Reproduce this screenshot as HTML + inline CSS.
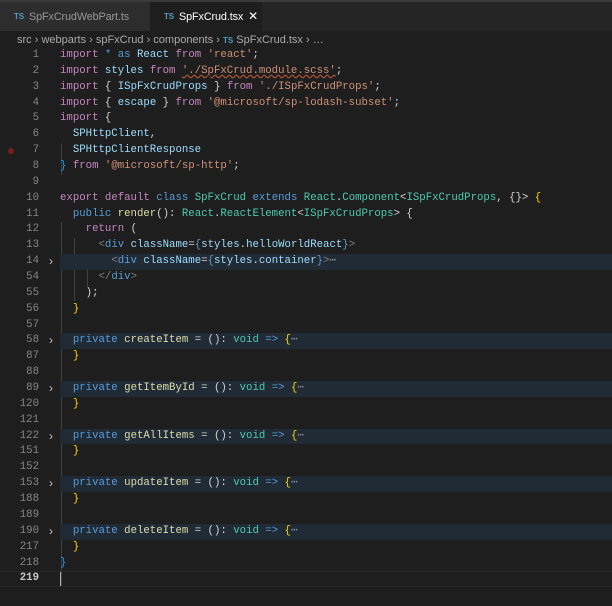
<!DOCTYPE html>
<html><head><meta charset="utf-8"><style>
body{margin:0;width:612px;height:606px;background:#1e1e1e;overflow:hidden;font-family:"Liberation Sans",sans-serif;position:relative}
.top{position:absolute;left:0;top:0;width:612px;height:2px;background:#3a3a3a}
.tabs{position:absolute;left:0;top:2px;width:612px;height:29px;background:#252526}
.tab{position:absolute;top:0;height:29px;font-size:10.8px;line-height:29px;color:#969696;white-space:nowrap;letter-spacing:-0.1px}
.t1{left:0;width:150px;background:#2d2d2d}
.t2{left:150px;width:112px;background:#1e1e1e;color:#fff}
.ts{color:#519aba;font-size:8px;font-weight:bold;margin:0 5px 0 14px;vertical-align:1px}
.bc{position:absolute;left:17px;top:31px;height:18px;line-height:18px;font-size:11px;color:#a9a9a9;white-space:nowrap}
.code{position:absolute;left:0;top:48px;width:612px;font-family:"Liberation Mono",monospace;font-size:10.7px}
.r{position:relative;height:15.86px;line-height:15.86px;white-space:pre}
.n{position:absolute;left:0;width:39px;text-align:right;color:#858585}
.c{position:absolute;left:60px;color:#d4d4d4}
.fb{position:absolute;left:60px;right:0;top:0;bottom:0;background:#212b36}
.ch{position:absolute;left:49px;color:#c5c5c5;font-family:"Liberation Sans";font-size:12px}
.k{color:#c586c0}.b{color:#569cd6}.v{color:#9cdcfe}.t{color:#4ec9b0}.s{color:#ce9178}.y{color:#dcdcaa}
.g{color:#ffd700}.p{color:#da70d6}.u{color:#179fff}.gr{color:#808080}.e{color:#8c8c8c}.w{color:#d4d4d4}
.ig{position:absolute;width:1px;background:#404040}
</style></head><body>
<div class="top"></div>
<div class="tabs">
<div class="tab t1"><span class="ts">TS</span>SpFxCrudWebPart.ts</div>
<div class="tab t2"><span class="ts">TS</span>SpFxCrud.tsx <span style="margin-left:2px;font-size:12px">✕</span></div>
</div>
<div class="bc">src › webparts › spFxCrud › components › <span style="color:#519aba;font-size:8px;font-weight:bold">TS</span> SpFxCrud.tsx › …</div>
<div style="position:absolute;left:8px;top:148px;width:6px;height:6px;border-radius:50%;background:#7a1d1d"></div>
<div class="ig" style="left:61px;top:143px;height:32px"></div>
<div class="ig" style="left:61px;top:222px;height:365px"></div>
<div class="ig" style="left:74px;top:238px;height:63px"></div>
<div class="ig" style="left:87px;top:254px;height:32px"></div>
<div class="code">
<div class="r"><span class="n">1</span><span class="c"><span class="k">import</span> <span class="b">*</span> <span class="b">as</span> <span class="v">React</span> <span class="k">from</span> <span class="s">'react'</span>;</span></div>
<div class="r"><span class="n">2</span><span class="c"><span class="k">import</span> <span class="v">styles</span> <span class="k">from</span> <span class="s" style="text-decoration:underline wavy #b5563a">'./SpFxCrud.module.scss'</span>;</span></div>
<div class="r"><span class="n">3</span><span class="c"><span class="k">import</span> <span class="w">{</span> <span class="v">ISpFxCrudProps</span> <span class="w">}</span> <span class="k">from</span> <span class="s">'./ISpFxCrudProps'</span>;</span></div>
<div class="r"><span class="n">4</span><span class="c"><span class="k">import</span> <span class="w">{</span> <span class="v">escape</span> <span class="w">}</span> <span class="k">from</span> <span class="s">'@microsoft/sp-lodash-subset'</span>;</span></div>
<div class="r"><span class="n">5</span><span class="c"><span class="k">import</span> <span class="w">{</span></span></div>
<div class="r"><span class="n">6</span><span class="c">  <span class="v">SPHttpClient</span>,</span></div>
<div class="r"><span class="n">7</span><span class="c">  <span class="v">SPHttpClientResponse</span></span></div>
<div class="r"><span class="n">8</span><span class="c"><span class="u">}</span> <span class="k">from</span> <span class="s">'@microsoft/sp-http'</span>;</span></div>
<div class="r"><span class="n">9</span></div>
<div class="r"><span class="n">10</span><span class="c"><span class="k">export</span> <span class="k">default</span> <span class="b">class</span> <span class="t">SpFxCrud</span> <span class="b">extends</span> <span class="t">React</span>.<span class="t">Component</span>&lt;<span class="t">ISpFxCrudProps</span>, <span class="w">{}</span>&gt; <span class="g">{</span></span></div>
<div class="r"><span class="n">11</span><span class="c">  <span class="b">public</span> <span class="y">render</span><span class="w">()</span>: <span class="t">React</span>.<span class="t">ReactElement</span>&lt;<span class="t">ISpFxCrudProps</span>&gt; <span class="w">{</span></span></div>
<div class="r"><span class="n">12</span><span class="c">    <span class="k">return</span> <span class="w">(</span></span></div>
<div class="r"><span class="n">13</span><span class="c">      <span class="gr">&lt;</span><span class="b">div</span> <span class="v">className</span>=<span class="b">{</span><span class="v">styles</span>.<span class="v">helloWorldReact</span><span class="b">}</span><span class="gr">&gt;</span></span></div>
<div class="r"><div class="fb"></div><span class="n">14</span><span class="ch">›</span><span class="c">        <span class="gr">&lt;</span><span class="b">div</span> <span class="v">className</span>=<span class="b">{</span><span class="v">styles</span>.<span class="v">container</span><span class="b">}</span><span class="gr">&gt;</span><span class="e">⋯</span></span></div>
<div class="r"><span class="n">54</span><span class="c">      <span class="gr">&lt;/</span><span class="b">div</span><span class="gr">&gt;</span></span></div>
<div class="r"><span class="n">55</span><span class="c">    <span class="w">)</span>;</span></div>
<div class="r"><span class="n">56</span><span class="c">  <span class="g">}</span></span></div>
<div class="r"><span class="n">57</span></div>
<div class="r"><div class="fb"></div><span class="n">58</span><span class="ch">›</span><span class="c">  <span class="b">private</span> <span class="y">createItem</span> = <span class="w">()</span>: <span class="t">void</span> <span class="b">=&gt;</span> <span class="g">{</span><span class="e">⋯</span></span></div>
<div class="r"><span class="n">87</span><span class="c">  <span class="g">}</span></span></div>
<div class="r"><span class="n">88</span></div>
<div class="r"><div class="fb"></div><span class="n">89</span><span class="ch">›</span><span class="c">  <span class="b">private</span> <span class="y">getItemById</span> = <span class="w">()</span>: <span class="t">void</span> <span class="b">=&gt;</span> <span class="g">{</span><span class="e">⋯</span></span></div>
<div class="r"><span class="n">120</span><span class="c">  <span class="g">}</span></span></div>
<div class="r"><span class="n">121</span></div>
<div class="r"><div class="fb"></div><span class="n">122</span><span class="ch">›</span><span class="c">  <span class="b">private</span> <span class="y">getAllItems</span> = <span class="w">()</span>: <span class="t">void</span> <span class="b">=&gt;</span> <span class="g">{</span><span class="e">⋯</span></span></div>
<div class="r"><span class="n">151</span><span class="c">  <span class="g">}</span></span></div>
<div class="r"><span class="n">152</span></div>
<div class="r"><div class="fb"></div><span class="n">153</span><span class="ch">›</span><span class="c">  <span class="b">private</span> <span class="y">updateItem</span> = <span class="w">()</span>: <span class="t">void</span> <span class="b">=&gt;</span> <span class="g">{</span><span class="e">⋯</span></span></div>
<div class="r"><span class="n">188</span><span class="c">  <span class="g">}</span></span></div>
<div class="r"><span class="n">189</span></div>
<div class="r"><div class="fb"></div><span class="n">190</span><span class="ch">›</span><span class="c">  <span class="b">private</span> <span class="y">deleteItem</span> = <span class="w">()</span>: <span class="t">void</span> <span class="b">=&gt;</span> <span class="g">{</span><span class="e">⋯</span></span></div>
<div class="r"><span class="n">217</span><span class="c">  <span class="g">}</span></span></div>
<div class="r"><span class="n">218</span><span class="c"><span class="u">}</span></span></div>
<div class="r" style="box-shadow:inset 0 1px #282828,inset 0 -1px #282828"><span class="n" style="color:#c6c6c6;font-weight:bold">219</span><span style="position:absolute;left:60px;top:1px;width:1px;height:14px;background:#aeafad"></span></div>
</div>
</body></html>
